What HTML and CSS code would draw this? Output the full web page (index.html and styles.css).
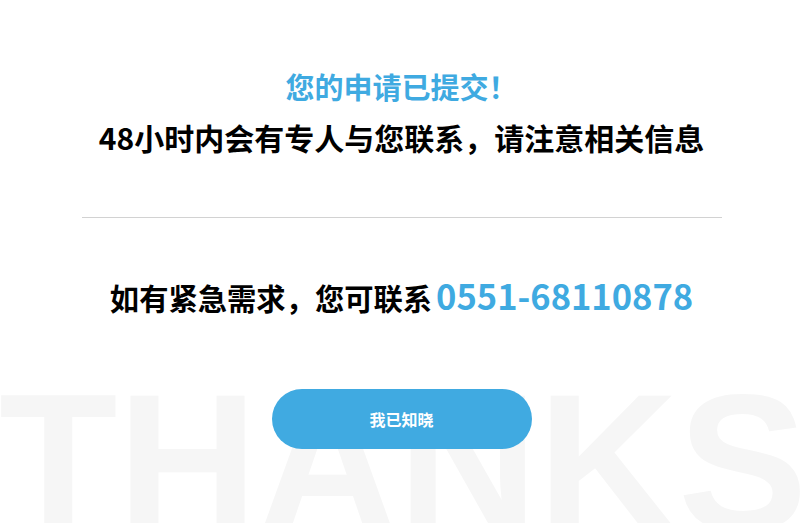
FILE: index.html
```html
<!DOCTYPE html>
<html lang="zh-CN">
<head>
<meta charset="utf-8">
<title>提交成功</title>
<link rel="stylesheet" href="styles.css">
</head>
<body>
<main class="page">
  <div class="thanks" aria-hidden="true">THANKS</div>
  <section class="content">
    <h1 class="title">您的申请已提交！</h1>
    <p class="subtitle">48小时内会有专人与您联系，请注意相关信息</p>
    <hr class="divider">
    <p class="contact">如有紧急需求，您可联系<span class="phone">0551-68110878</span></p>
    <button class="ok" type="button">我已知晓</button>
  </section>
</main>
</body>
</html>
```
FILE: styles.css
```css
html, body {
  margin: 0;
  padding: 0;
  background: #ffffff;
}

.page {
  position: relative;
  height: 523px;
  overflow: hidden;
  font-family: "Noto Sans CJK SC", "Noto Sans", sans-serif;
}

.thanks {
  position: absolute;
  left: -1px;
  top: 366px;
  font-family: "Liberation Sans", Arial, sans-serif;
  font-weight: 700;
  font-size: 194px;
  line-height: 1;
  color: #f6f6f6;
  white-space: nowrap;
  user-select: none;
}

.content {
  position: relative;
  display: flex;
  flex-direction: column;
  align-items: center;
  padding-top: 66px;
}

.title {
  margin: 0;
  font-size: 29px;
  line-height: 40px;
  font-weight: 700;
  color: #3faae1;
}

.subtitle {
  margin: 11px 0 0;
  font-size: 30px;
  line-height: 40px;
  font-weight: 700;
  color: #000000;
}

.divider {
  width: 640px;
  margin: 60px 0 0;
  border: 0;
  border-top: 1px solid #d2d2d2;
  height: 0;
}

.contact {
  margin: 52px 0 0;
  font-size: 29.3px;
  line-height: 50px;
  font-weight: 700;
  color: #000000;
}

.phone {
  margin-left: 4px;
  font-size: 34.5px;
  font-weight: 700;
  color: #3faae1;
}

.ok {
  margin-top: 67px;
  width: 260px;
  height: 60px;
  border: 0;
  border-radius: 30px;
  background: #40aae1;
  color: #ffffff;
  font-family: "Noto Sans CJK SC", sans-serif;
  font-size: 16px;
  font-weight: 700;
  cursor: pointer;
}
```
